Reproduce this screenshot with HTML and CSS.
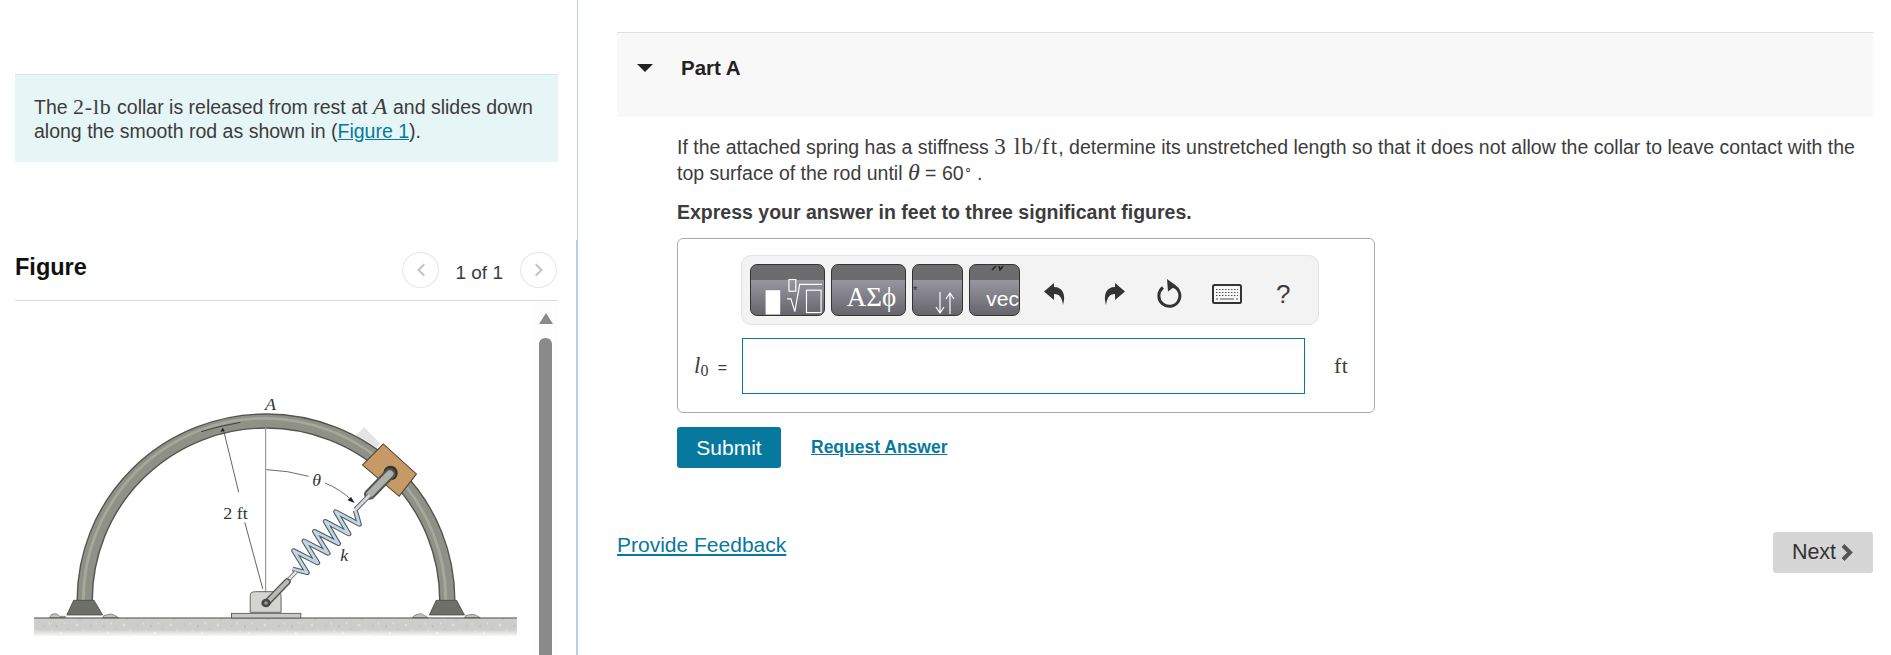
FILE: index.html
```html
<!DOCTYPE html>
<html lang="en">
<head>
<meta charset="utf-8">
<title>Part A</title>
<link rel="stylesheet" href="styles.css">
</head>
<body>
<div class="app">
  <aside class="left">
    <div class="intro">The <span class="m">2-lb</span> collar is released from rest at <span class="mi">A</span> and slides down along the smooth rod as shown in (<a href="#">Figure 1</a>).</div>
    <section class="figure">
      <header class="fig-head">
        <h2>Figure</h2>
        <div class="pager">
          <span class="circle"><svg viewBox="0 0 12 18" width="10" height="16"><path d="M10 2 3 9l7 7" class="chev"/></svg></span>
          <span class="count">1 of 1</span>
          <span class="circle"><svg viewBox="0 0 12 18" width="10" height="16"><path d="M2 2l7 7-7 7" class="chev"/></svg></span>
        </div>
      </header>
      <div class="fig-body">
        <svg class="drawing" viewBox="0 0 1560 825" preserveAspectRatio="none">
          <defs>
            <filter id="soft"><feGaussianBlur stdDeviation="1.8"/></filter>
            <pattern id="speck" width="131" height="56" patternUnits="userSpaceOnUse">
              <rect width="131" height="56" fill="#cdcdcb"/>
              <circle cx="6" cy="6" r="2" fill="#efefed"/><circle cx="27" cy="14" r="2.500" fill="#adadab"/><circle cx="48" cy="5" r="2" fill="#f1f1ef"/><circle cx="14" cy="27" r="2" fill="#ecece9"/><circle cx="60" cy="21" r="2" fill="#b0b0ae"/><circle cx="83" cy="10" r="3" fill="#eeeeec"/><circle cx="101" cy="26" r="2" fill="#f0f0ee"/><circle cx="122" cy="13" r="2" fill="#b4b4b2"/><circle cx="38" cy="34" r="3" fill="#efefed"/><circle cx="73" cy="39" r="2" fill="#f0f0ee"/><circle cx="112" cy="42" r="3" fill="#ececea"/><circle cx="92" cy="48" r="2" fill="#adadab"/><circle cx="20" cy="46" r="2" fill="#f0f0ee"/>
            </pattern>
            <linearGradient id="fade" x1="0" x2="0" y1="0" y2="1"><stop offset="0" stop-color="#fff" stop-opacity="0"/><stop offset=".6" stop-color="#fff" stop-opacity="0"/><stop offset="1" stop-color="#fff"/></linearGradient>
          </defs>
          <g filter="url(#soft)">
            <rect x="95" y="718" width="1345" height="54" fill="url(#speck)"/>
            <rect x="95" y="718" width="1345" height="56" fill="url(#fade)"/>
            <path d="M1015 145 1060 195 1040 215 985 175Z" fill="#e4e4e2"/>
            <g fill="none">
              <path class="rod a" d="M236 664A505 538 0 0 1 1246 664"/>
              <path class="rod b" d="M236 664A505 538 0 0 1 1246 664"/>
              <path class="rod c" d="M232 664A505 546 0 0 1 1242 664"/>
            </g>
            <path d="M205 664h57l24 44H186Z" fill="#6d6f67" stroke="#3c3d37" stroke-width="2"/>
            <path d="M1215 664h57l22 44h-98Z" fill="#6d6f67" stroke="#3c3d37" stroke-width="2"/>
            <path d="M138 716q4-12 14-12t14 8h16v4ZM286 716q2-10 12-8 8-6 20 0l12 8ZM1148 716q8-10 16-10l10-2 18 12ZM1294 716q2-10 12-8 10-4 18 0l14 8Z" fill="#c4c4be" stroke="#666" stroke-width="2"/>
            <path d="M95 717H1440" stroke="#45453f" stroke-width="3"/>
            <path d="M740 125V640" stroke="#8f8f89" stroke-width="3"/>
            <path d="M622 150 665 340M682 430 732 630" stroke="#4a4a44" stroke-width="2.500"/>
            <path d="M560 158Q615 140 670 130" stroke="#33332d" stroke-width="2.500" fill="none"/>
            <path d="M620 146l-6 12 12-2Z" fill="#222"/>
            <path d="M742 272Q800 274 860 292M905 312Q945 328 985 368" stroke="#55554f" stroke-width="2.500" fill="none"/>
            <path d="M988 372l-20-8 10-10Z" fill="#222"/>
            <path d="M1068 195 1160 285 1112 352 1010 258Z" fill="#c59a66" stroke="#4d3c2a" stroke-width="3"/>
            <ellipse cx="1088" cy="282" rx="20" ry="22" fill="#35332f"/>
            <path d="M1086 284 1030 346" stroke="#55554f" stroke-width="32" stroke-linecap="round"/>
            <path d="M1086 284 1030 346" stroke="#aeb0ac" stroke-width="20" stroke-linecap="round"/>
            <path d="M1030 348 990 392" stroke="#666" stroke-width="14"/>
            <path d="M1030 348 990 392" stroke="#d6dbdd" stroke-width="8"/>
            <path class="spring-o" d="M990 395 1001 436 935 398 972 465 906 427 943 494 876 457 914 523 847 486 885 552 818 515 856 581 815 570"/>
            <path class="spring-i" d="M990 395 1001 436 935 398 972 465 906 427 943 494 876 457 914 523 847 486 885 552 818 515 856 581 815 570"/>
            <path d="M825 578 800 606" stroke="#777" stroke-width="12"/>
            <path d="M825 578 800 606" stroke="#dfe3e5" stroke-width="7"/>
            <path d="M697 700V650Q697 638 712 638H770Q783 638 783 652V700Z" fill="#d4d4d0" stroke="#54544e" stroke-width="2.500"/>
            <rect x="645" y="703" width="193" height="14" fill="#c9c9c5" stroke="#54544e" stroke-width="2.500"/>
            <path d="M800 608 746 668" stroke="#55554f" stroke-width="20" stroke-linecap="round"/>
            <path d="M800 608 746 668" stroke="#b8bab6" stroke-width="12" stroke-linecap="round"/>
            <circle cx="741" cy="672" r="13" fill="#4a4a46"/><circle cx="741" cy="672" r="5" fill="#999"/>
          </g>
          <g class="labels">
            <text x="738" y="92" class="it">A</text>
            <text x="622" y="420">2 ft</text>
            <text x="870" y="322" class="it">θ</text>
            <text x="948" y="545" class="it">k</text>
          </g>
        </svg>
        <div class="scroll">
          <span class="up"></span>
          <span class="thumb"></span>
        </div>
      </div>
    </section>
  </aside>
  <main class="right">
    <div class="part-head"><span class="tri"></span><h3>Part A</h3></div>
    <div class="part-body">
      <p class="q">If the attached spring has a stiffness <span class="m">3 lb/ft</span>, determine its unstretched length so that it does not allow the collar to leave contact with the top surface of the rod until <span class="mi">θ</span> = 60<sup>∘</sup> .</p>
      <p class="ins">Express your answer in feet to three significant figures.</p>
      <div class="answer">
        <div class="toolbar">
          <div class="tools">
            <span class="tb w1"><svg viewBox="0 0 75 36" width="75" height="36"><rect x="15" y="11" width="15" height="25" fill="#fff"/><rect x="39" y="0" width="7" height="12" class="hollow"/><path d="M37 20l4 0 4 13 5-28h23" class="hollow"/><rect x="57" y="11" width="15" height="23" class="hollow"/></svg></span>
            <span class="tb w1 greek">ΑΣϕ</span>
            <span class="tb w2"><span class="star">*</span><svg class="arrows" viewBox="0 0 20 24" width="20" height="24"><path d="M5 1V21M1 16l4 6 4-6M15 23V3M11 8l4-6 4 6" class="hollow"/></svg></span>
            <span class="tb w2 vec"><svg class="frag" viewBox="0 0 14 6" width="14" height="6"><path d="M1 5 5 1M8 1l1 4 3-4" fill="none" stroke="#222" stroke-width="1.500"/></svg>vec</span>
          </div>
          <div class="actions">
            <svg class="ic" viewBox="0 0 22 24" width="22" height="24"><path d="M10 1 0 9.500 10 18v-6c5 0 8 3 9 11 3-10 0-18-9-18Z"/></svg>
            <svg class="ic" viewBox="0 0 22 24" width="22" height="24"><path d="M12 1 22 9.500 12 18v-6c-5 0-8 3-9 11C0 13 3 5 12 5Z"/></svg>
            <svg class="ic" viewBox="0 0 26 30" width="26" height="30"><path d="M17 7A10.500 10.500 0 1 1 7 8.500" fill="none" stroke="#333" stroke-width="3"/><path d="M11 0l9 6.500-8 6Z"/></svg>
            <svg class="ic" viewBox="0 0 30 20" width="30" height="20"><rect x="1" y="1" width="28" height="18" rx="1.500" fill="#f7f7f7" stroke="#333" stroke-width="2"/><path d="M4 5.500h22M4 8.500h22M4 11.500h22" stroke="#555" stroke-width="1.200" stroke-dasharray="1.500 1.500"/><path d="M8 15h14M4 15h2M24 15h2" stroke="#555" stroke-width="1.200"/></svg>
            <span class="help">?</span>
          </div>
        </div>
        <div class="row">
          <label><span class="mi">l</span><span class="sub">0</span> =</label>
          <input class="field" type="text" aria-label="answer">
          <span class="unit">ft</span>
        </div>
      </div>
      <div class="submit-row">
        <button class="submit" type="button">Submit</button>
        <a class="req" href="#">Request Answer</a>
      </div>
    </div>
    <div class="foot">
      <a class="fb" href="#">Provide Feedback</a>
      <button class="next" type="button">Next <svg viewBox="0 0 14 18" width="14" height="19"><path d="M3 2l7 7-7 7" fill="none" stroke="#555" stroke-width="4"/></svg></button>
    </div>
  </main>
</div>
</body>
</html>
```
FILE: styles.css
```css
* { box-sizing: border-box; }
html, body { margin: 0; height: 100%; background: #fff; }
body { font-family: "Liberation Sans", Arial, sans-serif; color: #3c3c3c; font-size: 19.500px; overflow: hidden; }
a { color: #07799e; }
.app { display: flex; height: 655px; overflow: hidden; }

.left { width: 578px; flex: none; border-right: 1px solid #bccde2; padding-top: 74px; display: flex; flex-direction: column; }
.intro { margin-left: 15px; width: 543px; height: 88px; background: #e6f5f6; border-top: 1px solid #d9e5e5; padding: 19px 10px 0 19px; line-height: 24px; font-size: 19.500px; }
.m { font-family: "Liberation Serif", serif; font-size: 22px; letter-spacing: .8px; }
.mi { font-family: "Liberation Serif", serif; font-style: italic; font-size: 24px; }

.figure { margin-top: 78px; padding-left: 15px; flex: 1; border-right: 1px solid #bccde2; min-height: 0; display: flex; flex-direction: column; }
.fig-head { width: 542px; height: 61px; border-bottom: 1px solid #dcdcdc; display: flex; justify-content: space-between; padding-top: 12px; flex: none; }
.fig-head h2 { margin: 0; font-size: 23.500px; line-height: 30px; color: #111; }
.pager { display: flex; align-items: flex-start; }
.circle { width: 37px; height: 36px; border: 1px solid #e6e6e6; border-radius: 50%; display: flex; align-items: center; justify-content: center; }
.chev { fill: none; stroke: #c4c4c4; stroke-width: 2.500; }
.count { margin: 1px 17px 0 16px; font-size: 19px; line-height: 40px; }
.fig-body { position: relative; width: 542px; flex: 1; min-height: 0; }
.drawing { position: absolute; left: -15px; top: 78px; width: 560px; height: 275px; }
.rod { stroke-linecap: butt; }
.a { stroke: #54564e; stroke-width: 46px; }
.b { stroke: #8f9187; stroke-width: 38px; }
.c { stroke: #b5b6ac; stroke-width: 8px; opacity: .6; }
.spring-o { fill: none; stroke: #4c5a62; stroke-width: 14px; stroke-linejoin: round; }
.spring-i { fill: none; stroke: #c3d6e0; stroke-width: 8px; stroke-linejoin: round; }
.labels text { font-family: "Liberation Serif", serif; font-size: 50px; fill: #333; }
.labels .it { font-style: italic; }
.scroll { position: absolute; right: 0; top: 0; bottom: 0; width: 23px; background: #fdfdfd; display: flex; flex-direction: column; align-items: center; padding-top: 12px; }
.up { width: 0; height: 0; border-left: 7px solid transparent; border-right: 7px solid transparent; border-bottom: 11px solid #8a8a8a; }
.thumb { width: 13px; flex: 1; margin-top: 14px; background: #8a8a8a; border-radius: 6px 6px 0 0; }

.right { flex: 1; min-width: 0; padding: 32px 18px 0 39px; display: flex; flex-direction: column; }
.part-head { height: 85px; background: #f8f8f8; border-top: 1px solid #dedede; display: flex; align-items: flex-start; padding: 23px 0 0 20px; flex: none; }
.tri { width: 0; height: 0; margin-top: 8px; border-left: 8px solid transparent; border-right: 8px solid transparent; border-top: 8px solid #222; }
.part-head h3 { margin: 0 0 0 28px; font-size: 20.500px; line-height: 24px; color: #222; }
.part-body { padding-left: 60px; }
.q { margin: 18px 0 0; line-height: 25px; width: 1195px; }
.q .m { font-size: 23px; letter-spacing: 1.200px; line-height: 1; }
.q .mi { line-height: 1; }
.q sup { font-size: 13px; line-height: 0; }
.ins { margin: 13px 0 0; font-weight: bold; line-height: 26px; }
.answer { margin-top: 13px; width: 698px; height: 175px; border: 1px solid #aaa; border-radius: 6px; padding: 16px 0 0; position: relative; }
.toolbar { margin-left: 63px; width: 578px; height: 70px; background: #f3f3f3; border: 1px solid #e3e3e3; border-radius: 10px; display: flex; align-items: center; padding-left: 8px; }
.tools { display: flex; gap: 6px; }
.tb { height: 52px; border-radius: 7px; border: 1px solid #333; background: linear-gradient(#6c6c6e 0 15px, #98969f 15px, #66656b); color: #fff; overflow: hidden; display: flex; align-items: flex-end; justify-content: flex-end; position: relative; }
.w1 { width: 75px; }
.w2 { width: 51px; }
.hollow { fill: none; stroke: #fff; stroke-width: 1.200; }
.greek { font-family: "Liberation Serif", serif; font-size: 27px; line-height: 35px; justify-content: center; padding-left: 6px; }
.arrows { margin-right: 7px; }
.star { position: absolute; left: 0; top: 19px; font-size: 11px; line-height: 12px; color: #333; }
.vec { font-size: 21px; line-height: 32px; }
.frag { position: absolute; left: 21px; top: 0; }
.actions { display: flex; align-items: center; margin-left: 24px; margin-top: 8px; flex: none; }
.ic { fill: #333; flex: none; }
.actions .ic:nth-child(1) { margin-right: 29px; }
.actions .ic:nth-child(2) { margin-left: 8px; margin-right: 31px; }
.actions .ic:nth-child(3) { margin-right: 30px; }
.help { font-size: 26px; margin-left: 34px; }
.row { display: flex; align-items: center; margin-top: 13px; height: 56px; padding-left: 16px; }
.row label { width: 48px; font-size: 16px; white-space: nowrap; }
.row .mi { font-size: 23px; }
.sub { font-family: "Liberation Serif", serif; font-size: 16px; vertical-align: -3px; margin-right: 5px; }
.field { width: 563px; height: 56px; border: 1px solid #07799e; background: #fff; flex: none; }
.unit { margin-left: 29px; font-family: "Liberation Serif", serif; font-size: 22px; letter-spacing: .5px; }
.submit-row { display: flex; align-items: center; margin-top: 14px; }
.submit { width: 104px; height: 41px; border: 0; border-radius: 3px; background: #07799e; color: #fff; font: 21px "Liberation Sans", sans-serif; }
.req { margin-left: 30px; font-weight: bold; font-size: 17.500px; }
.foot { display: flex; justify-content: space-between; align-items: flex-start; margin-top: 64px; }
.fb { font-size: 21px; margin-top: 1px; }
.next { width: 100px; height: 41px; border: 0; border-radius: 3px; background: #d6d6d6; color: #333; font: 21.500px "Liberation Sans", sans-serif; display: flex; align-items: center; justify-content: center; gap: 4px; }
```
